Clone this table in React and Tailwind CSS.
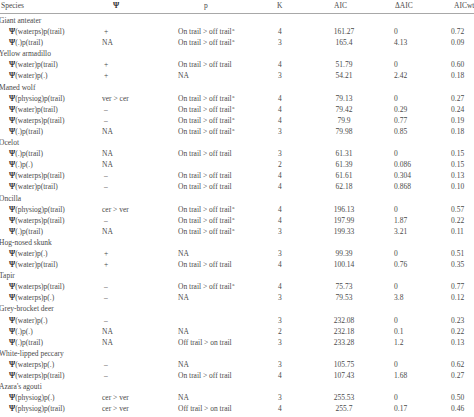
import React from "react";

const A = "A";
const groups = [
  ["Giant anteater", [
    ["(waterps)p(trail)", "+", "On trail > off trail", A, "4", "161.27", "0", "0.72"],
    ["(.)p(trail)", "NA", "On trail > off trail", A, "3", "165.4", "4.13", "0.09"],
  ]],
  ["Yellow armadillo", [
    ["(water)p(trail)", "+", "On trail > off trail", "", "4", "51.79", "0", "0.60"],
    ["(water)p(.)", "+", "NA", "", "3", "54.21", "2.42", "0.18"],
  ]],
  ["Maned wolf", [
    ["(physiog)p(trail)", "ver > cer", "On trail > off trail", A, "4", "79.13", "0", "0.27"],
    ["(water)p(trail)", "–", "On trail > off trail", A, "4", "79.42", "0.29", "0.24"],
    ["(waterps)p(trail)", "–", "On trail > off trail", A, "4", "79.9", "0.77", "0.19"],
    ["(.)p(trail)", "NA", "On trail > off trail", A, "3", "79.98", "0.85", "0.18"],
  ]],
  ["Ocelot", [
    ["(.)p(trail)", "NA", "On trail > off trail", "", "3", "61.31", "0", "0.15"],
    ["(.)p(.)", "NA", "", "", "2", "61.39", "0.086", "0.15"],
    ["(waterps)p(trail)", "–", "On trail > off trail", "", "4", "61.61", "0.304", "0.13"],
    ["(water)p(trail)", "–", "On trail > off trail", "", "4", "62.18", "0.868", "0.10"],
  ]],
  ["Oncilla", [
    ["(physiog)p(trail)", "cer > ver", "On trail > off trail", A, "4", "196.13", "0", "0.57"],
    ["(waterps)p(trail)", "–", "On trail > off trail", A, "4", "197.99", "1.87", "0.22"],
    ["(.)p(trail)", "NA", "On trail > off trail", A, "3", "199.33", "3.21", "0.11"],
  ]],
  ["Hog-nosed skunk", [
    ["(water)p(.)", "+", "NA", "", "3", "99.39", "0", "0.51"],
    ["(water)p(trail)", "+", "On trail > off trail", "", "4", "100.14", "0.76", "0.35"],
  ]],
  ["Tapir", [
    ["(waterps)p(trail)", "–", "On trail > off trail", A, "4", "75.73", "0", "0.77"],
    ["(waterps)p(.)", "–", "NA", "", "3", "79.53", "3.8", "0.12"],
  ]],
  ["Grey-brocket deer", [
    ["(water)p(.)", "–", "", "", "3", "232.08", "0", "0.23"],
    ["(.)p(.)", "NA", "NA", "", "2", "232.18", "0.1", "0.22"],
    ["(.)p(trail)", "NA", "Off trail > on trail", "", "3", "233.28", "1.2", "0.13"],
  ]],
  ["White-lipped peccary", [
    ["(waterps)p(.)", "–", "NA", "", "3", "105.75", "0", "0.62"],
    ["(waterps)p(trail)", "–", "On trail > off trail", "", "4", "107.43", "1.68", "0.27"],
  ]],
  ["Azara's agouti", [
    ["(physiog)p(.)", "cer > ver", "NA", "", "3", "255.53", "0", "0.50"],
    ["(physiog)p(trail)", "cer > ver", "Off trail > on trail", "", "4", "255.7", "0.17", "0.46"],
  ]],
];

function Row({ r }) {
  const [model, psi, p, sup, k, aic, daic, wt] = r;
  return (
    <div className="flex h-[11.1px] items-center whitespace-nowrap">
      <div className="w-[102px] shrink-0 pl-[9px]">
        <span className="font-bold text-[#333] text-[8px]">Ψ</span>
        {model}
      </div>
      <div className="w-[76px] shrink-0">{psi === "+" || psi === "–" ? <span className="pl-[2px]">{psi}</span> : psi}</div>
      <div className="w-[100px] shrink-0">
        {p}
        {sup && <span className="text-[5px] leading-none relative -top-[3px] ml-[0.5px]">a</span>}
      </div>
      <div className="w-[54px] shrink-0">{k}</div>
      <div className="w-[61px] shrink-0">
        <div className="w-[24px] text-center">{aic}</div>
      </div>
      <div className="w-[58px] shrink-0 pl-[1px]">{daic}</div>
      <div className="shrink-0">{wt}</div>
    </div>
  );
}

export default function App() {
  return (
    <div
      className="w-[474px] h-[417px] overflow-hidden bg-white text-[#4a4a4a] text-[7.5px] leading-[11.1px]"
      style={{ fontFamily: '"Liberation Serif", "Times New Roman", serif' }}
    >
      <div className="flex h-[14px] items-center whitespace-nowrap border-b border-[#a8a8a8] pb-[2px]">
        <div className="w-[113px] shrink-0 pl-px">Species</div>
        <div className="w-[91px] shrink-0 font-bold text-[#333] text-[8px]">Ψ</div>
        <div className="w-[73px] shrink-0">p</div>
        <div className="w-[57px] shrink-0">K</div>
        <div className="w-[61px] shrink-0">AIC</div>
        <div className="w-[59px] shrink-0">ΔAIC</div>
        <div className="shrink-0">AICwt</div>
      </div>
      <div className="pt-[1px]">
        {groups.map(([name, rows]) => (
          <div key={name}>
            <div className="h-[11.1px] flex items-center whitespace-nowrap -ml-px">{name}</div>
            {rows.map((r, i) => (
              <Row key={i} r={r} />
            ))}
          </div>
        ))}
      </div>
    </div>
  );
}
